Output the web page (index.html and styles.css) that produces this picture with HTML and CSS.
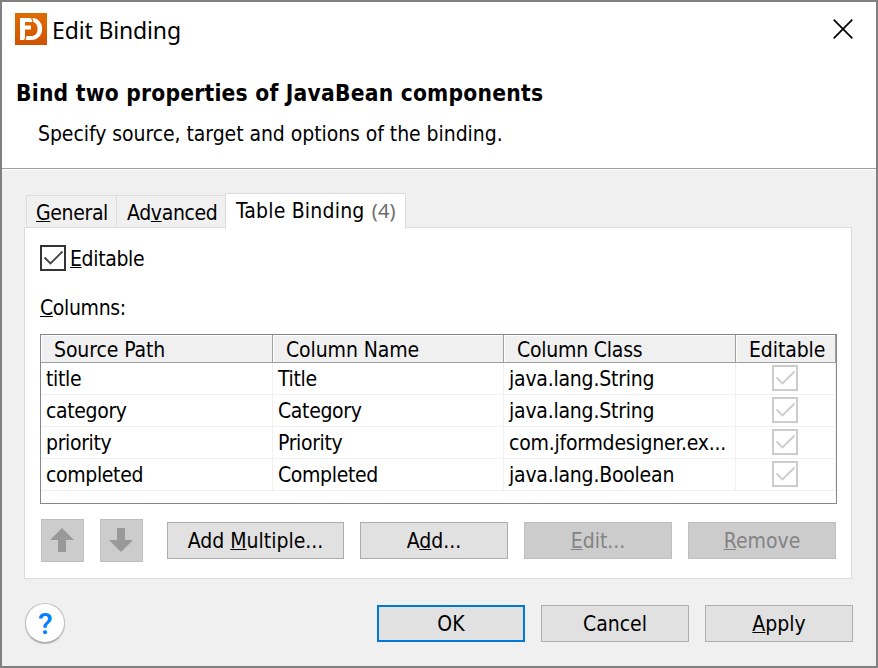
FILE: index.html
```html
<!DOCTYPE html>
<html lang="en">
<head>
    <meta charset="UTF-8">
    <meta name="viewport" content="width=device-width, initial-scale=1.0">
    <title>Edit Binding</title>
    <link rel="stylesheet" href="styles.css">
</head>
<body>

<svg class="defs" width="0" height="0">
    <symbol id="check" viewBox="0 0 26 26">
        <path d="M4.500 12.500l6 6L22.500 6.500" fill="none" stroke="currentColor" stroke-width="1.8"/>
    </symbol>
</svg>

<div class="dialog">
    <div class="header">
        <div class="titlebar">
            <svg class="logo" viewBox="0 0 32 32">
                <defs>
                    <linearGradient id="logo-bg" x1="0" y1="0" x2="0" y2="1">
                        <stop offset="0" stop-color="#e06c00"/>
                        <stop offset="1" stop-color="#cf5200"/>
                    </linearGradient>
                </defs>
                <rect width="32" height="32" fill="url(#logo-bg)"/>
                <path d="M5 5h11l1.500 4H10v3.500h6v4h-6V25l-1 2H5z" fill="#fff"/>
                <path d="M17.500 5C23.500 5.500 27.200 10 27.200 16S23 27 16 27h-5.500l1-4H16c4 0 6.600-2.500 6.600-7 0-3.500-1.600-6-4.100-7z" fill="#fff"/>
            </svg>
            <span class="title">Edit Binding</span>
            <svg class="close" viewBox="0 0 20 20"><path d="M.7.7l18.600 18.600M19.300.7L.7 19.300" stroke="#000" stroke-width="1.700"/></svg>
        </div>
        <h1>Bind two properties of JavaBean components</h1>
        <p>Specify source, target and options of the binding.</p>
    </div>

    <div class="content">
        <div class="tabs">
            <div class="tab general"><span><u>G</u>eneral</span></div>
            <div class="tab advanced"><span>Ad<u>v</u>anced</span></div>
            <div class="tab active"><span>Table Binding</span> <span class="count">(4)</span></div>
        </div>
        <div class="panel">
            <label class="option">
                <span class="checkbox"><svg><use href="#check"/></svg></span>
                <span class="text"><u>E</u>ditable</span>
            </label>
            <div class="label"><u>C</u>olumns:</div>

            <div class="table">
                <div class="row head">
                    <div>Source Path</div><div>Column Name</div><div>Column Class</div><div>Editable</div>
                </div>
                <div class="row">
                    <div>title</div><div>Title</div><div>java.lang.String</div>
                    <div><span class="checkbox disabled"><svg><use href="#check"/></svg></span></div>
                </div>
                <div class="row">
                    <div>category</div><div>Category</div><div>java.lang.String</div>
                    <div><span class="checkbox disabled"><svg><use href="#check"/></svg></span></div>
                </div>
                <div class="row">
                    <div>priority</div><div>Priority</div><div>com.jformdesigner.ex...</div>
                    <div><span class="checkbox disabled"><svg><use href="#check"/></svg></span></div>
                </div>
                <div class="row">
                    <div>completed</div><div>Completed</div><div>java.lang.Boolean</div>
                    <div><span class="checkbox disabled"><svg><use href="#check"/></svg></span></div>
                </div>
            </div>

            <div class="actions">
                <button class="arrow" disabled><svg viewBox="0 0 24 24"><path d="M12 0l12 12h-8v12H8V12H0z"/></svg></button>
                <button class="arrow" disabled><svg viewBox="0 0 24 24"><path d="M12 24L0 12h8V0h8v12h8z"/></svg></button>
                <button class="wide">Add <u>M</u>ultiple...</button>
                <button>A<u>d</u>d...</button>
                <button disabled><u>E</u>dit...</button>
                <button disabled><u>R</u>emove</button>
            </div>
        </div>
    </div>

    <div class="footer">
        <div class="help">?</div>
        <button class="default">OK</button>
        <button>Cancel</button>
        <button><u>A</u>pply</button>
    </div>
</div>

</body>
</html>
```

FILE: styles.css
```css
* {
    box-sizing: border-box;
}
body {
    margin: 0;
    font-family: "DejaVu Sans Condensed", "DejaVu Sans", sans-serif;
    font-stretch: condensed;
    font-size: 21px;
    line-height: 26px;
    letter-spacing: -0.35px;
    color: #000;
}
u {
    text-decoration: underline;
    text-decoration-thickness: 1px;
    text-underline-offset: 1px;
    text-decoration-skip-ink: none;
}
.defs {
    position: absolute;
}
.dialog {
    width: 878px;
    height: 668px;
    border: 2px solid #808080;
    background-color: #f0f0f0;
    overflow: hidden;
    white-space: nowrap;
}

/* header */
.header {
    height: 168px;
    padding-top: 11px;
    background-color: #fff;
    border-bottom: 1px solid #fff;
    box-shadow: inset 0 -1px #a0a0a0;
}
.titlebar {
    display: flex;
    align-items: center;
    height: 32px;
    padding: 0 23px 0 13px;
}
.logo {
    width: 32px;
    height: 32px;
}
.title {
    flex: 1;
    margin: 1px 0 0 5px;
    font-family: "Noto Sans", sans-serif;
    font-size: 23px;
    letter-spacing: -0.15px;
}
.close {
    width: 20px;
    height: 20px;
}
h1 {
    margin: 35px 0 0 14px;
    font-size: 22.6px;
    line-height: 26px;
    letter-spacing: 0.23px;
}
p {
    margin: 15px 0 0 36px;
    letter-spacing: -0.06px;
}

/* tabs */
.content {
    padding: 23px 24px 0 22px;
}
.tabs {
    display: flex;
    align-items: flex-end;
    height: 35px;
    padding-left: 2px;
}
.tab {
    height: 33px;
    padding: 4px 0 0 9px;
    border: 1px solid #dcdcdc;
    border-width: 1px 0 0 1px;
}
.general {
    width: 90px;
}
.advanced {
    width: 109px;
    padding-left: 10px;
}
.active {
    position: relative;
    width: 181px;
    height: 36px;
    margin-bottom: -1px;
    padding: 4px 0 0 10px;
    border-right-width: 1px;
    background-color: #fff;
    letter-spacing: 0.2px;
}
.count {
    margin-left: 1px;
    color: #6d6d6d;
    font-family: "Noto Sans", sans-serif;
    font-size: 20px;
    letter-spacing: 0.2px;
}
.panel {
    height: 352px;
    margin-top: -1px;
    padding: 17px 14px 0 15px;
    background-color: #fff;
    border: 1px solid #dcdcdc;
}
.option {
    display: flex;
    align-items: center;
    gap: 4px;
}
.text {
    padding-top: 1px;
    margin-bottom: -1px;
}
.checkbox {
    display: block;
    width: 26px;
    height: 26px;
    border: 2px solid #333;
    color: #444;
}
.checkbox svg {
    display: block;
    width: 26px;
    height: 26px;
    margin: -2px;
}
.disabled {
    border-color: #ccc;
    color: #ccc;
}
.label {
    margin: 24px 0 13px;
}

/* table */
.table {
    width: 797px;
    height: 170px;
    border: 1px solid #828790;
}
.row {
    display: grid;
    grid-template-columns: 232px 231px 232px 100px;
    height: 32px;
}
.row div {
    padding: 3px 0 0 5px;
    border-right: 1px solid #f0f0f0;
    border-bottom: 1px solid #f0f0f0;
}
.row div:nth-child(3) {
    letter-spacing: -0.22px;
}
.row div:last-child {
    padding: 2px 0 0 36px;
}
.head {
    height: 28px;
    letter-spacing: -0.1px;
}
.head div,
.head div:last-child {
    padding: 3px 0 0 13px;
    line-height: 24px;
    background-color: #f0f0f0;
    border-color: #a0a0a0;
    box-shadow: inset 1px 1px #fff;
}

/* buttons */
.actions {
    display: flex;
    align-items: center;
    gap: 16px;
    height: 43px;
    margin: 15px 0 0 1px;
}
button {
    width: 148px;
    height: 37px;
    padding: 0;
    background-color: #e1e1e1;
    border: 1px solid #adadad;
    color: #000;
    font: inherit;
}
button:disabled {
    background-color: #ccc;
    border-color: #bfbfbf;
    color: #838383;
}
.arrow {
    display: flex;
    width: 43px;
    height: 43px;
    padding: 8px 0 0 8px;
}
.arrow svg {
    width: 24px;
    height: 24px;
    fill: #999;
}
.wide {
    width: 177px;
    margin-left: 8px;
}
.footer {
    display: flex;
    align-items: center;
    gap: 16px;
    margin-top: 24px;
    padding: 0 23px;
}
.footer button {
    padding-top: 2px;
}
.default {
    border: 2px solid #0078d7;
}
.help {
    width: 40px;
    height: 40px;
    margin-right: auto;
    border: 1px solid #c2c2c2;
    border-bottom-color: #aaa;
    border-radius: 50%;
    background-color: #fff;
    box-shadow: 0 1px 1px #bbb;
    color: #0080ff;
    font: 500 30px/39px Roboto, sans-serif;
    text-align: center;
}
```
